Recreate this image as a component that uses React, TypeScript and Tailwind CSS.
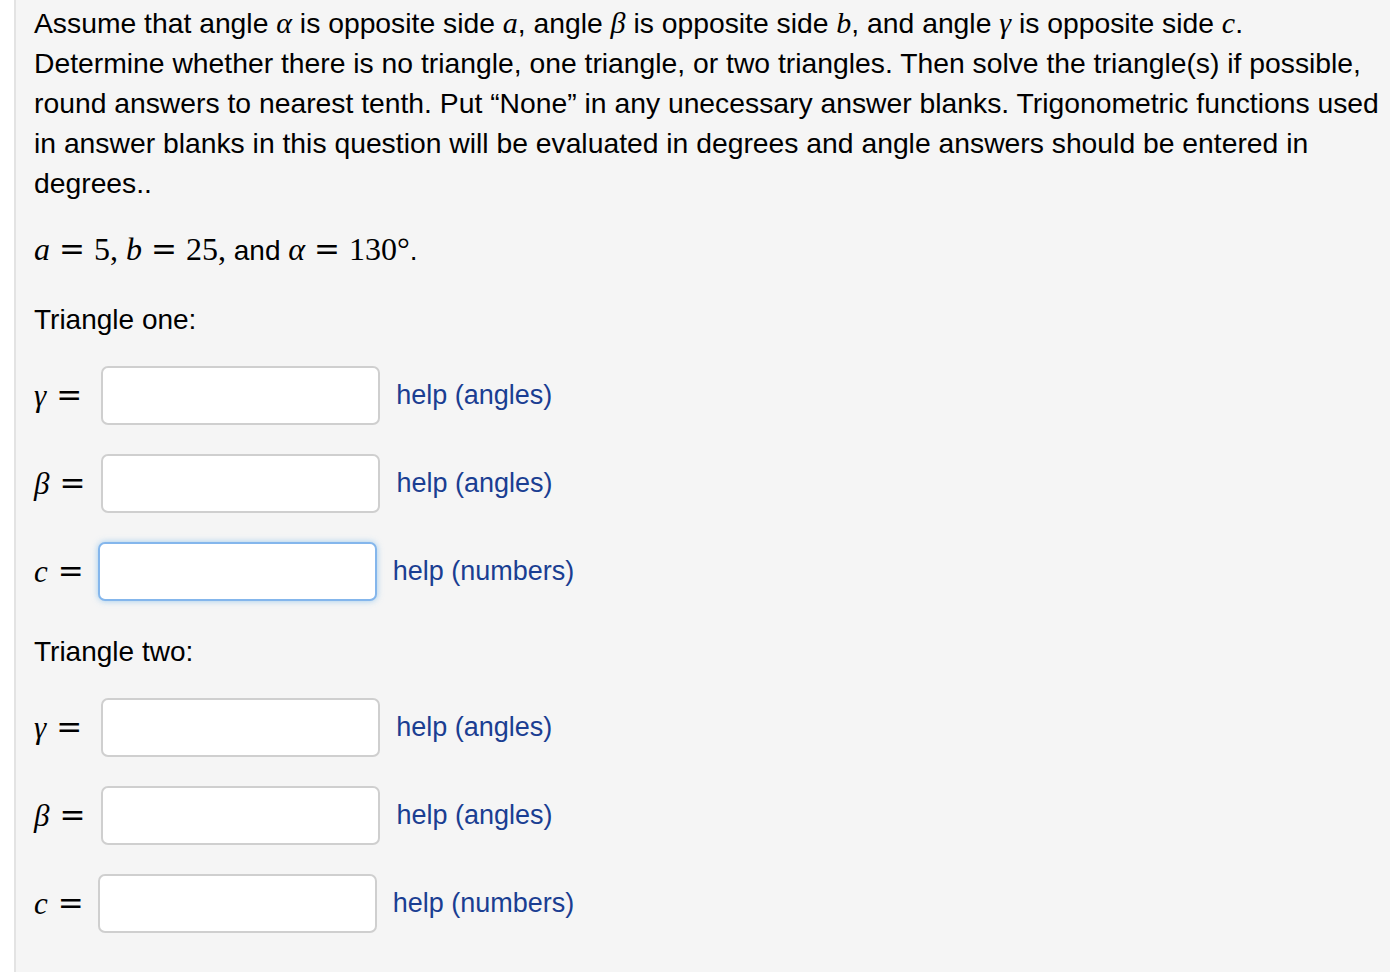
import React from 'react';

const sans = { fontFamily: '"Liberation Sans", Arial, sans-serif' };
const serif = { fontFamily: '"Liberation Serif", serif' };
const eqFont = { fontFamily: '"DejaVu Serif", serif' };

const V = ({ children }: { children: React.ReactNode }) => (
  <span className="italic text-[30px]" style={serif}>
    {children}
  </span>
);

const Eq = () => (
  <span className="mx-[9px] text-[31px]" style={eqFont}>
    =
  </span>
);

interface RowProps {
  label: string;
  help: string;
  focused?: boolean;
  gap: string;
}

const AnswerRow = ({ label, help, focused, gap }: RowProps) => (
  <div className="flex items-center h-[59px]">
    <span className="text-[31px] leading-[40px] text-black whitespace-nowrap" style={serif}>
      <span className="italic">{label}</span>
      <span className="ml-[10px] text-[31px]" style={eqFont}>
        =
      </span>
    </span>
    <input
      type="text"
      className={
        gap +
        (focused
          ? ' w-[279px] h-[59px] rounded-[7px] bg-white border-2 border-[#84b6ec] shadow-[0_0_6px_rgba(102,175,233,0.6)] outline-none'
          : ' w-[279px] h-[59px] rounded-[7px] bg-white border-2 border-[#cfcfcf] outline-none')
      }
    />
    <a className="ml-[16px] text-[27px] text-[#1a3e92] whitespace-nowrap cursor-pointer" style={sans}>
      {help}
    </a>
  </div>
);

const TriangleRows = ({ focusC }: { focusC?: boolean }) => (
  <>
    <AnswerRow label="γ" help="help (angles)" gap="ml-[19px]" />
    <AnswerRow label="β" help="help (angles)" gap="ml-[16px]" />
    <AnswerRow label="c" help="help (numbers)" gap="ml-[14px]" focused={focusC} />
  </>
);

export default function App() {
  return (
    <div className="min-h-[972px] bg-white pl-[14px]">
      <div
        className="min-h-[972px] bg-[#f5f5f5] border-l-2 border-[#e3e3e3] pl-[18px] pt-[3px] text-black"
        style={sans}
      >
        <div className="flex flex-col gap-[29px]">
          <p className="text-[28.3px] leading-[40px] -mb-[3px] whitespace-nowrap">
            Assume that angle <V>α</V> is opposite side <V>a</V>, angle <V>β</V> is opposite side <V>b</V>, and
            angle <V>γ</V> is opposite side <V>c</V>.
            <br />
            Determine whether there is no triangle, one triangle, or two triangles. Then solve the triangle(s) if
            possible,
            <br />
            round answers to nearest tenth. Put “None” in any unecessary answer blanks. Trigonometric functions used
            <br />
            in answer blanks in this question will be evaluated in degrees and angle answers should be entered in
            <br />
            degrees..
          </p>
          <p className="text-[28px] leading-[40px] h-[40px] whitespace-nowrap">
            <span className="text-[32px]" style={serif}>
              <span className="italic">a</span>
              <Eq />5, <span className="italic">b</span>
              <Eq />
              25,
            </span>{' '}
            and{' '}
            <span className="text-[32px]" style={serif}>
              <span className="italic">α</span>
              <Eq />
              130°
            </span>
            .
          </p>
          <p className="text-[28px] leading-[44px] h-[39px]">Triangle one:</p>
          <TriangleRows focusC />
          <p className="text-[28px] leading-[44px] h-[39px]">Triangle two:</p>
          <TriangleRows />
        </div>
      </div>
    </div>
  );
}
